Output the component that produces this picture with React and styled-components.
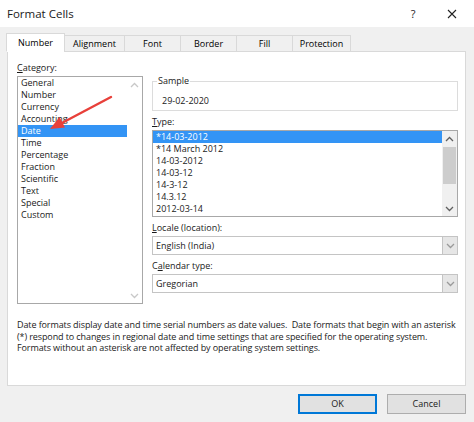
import React from "react";
import styled, { createGlobalStyle } from "styled-components";

const GlobalStyle = createGlobalStyle`
  body {
    margin: 0;
    background: #fff;
    font-family: "Open Sans", "Noto Sans", sans-serif;
    color: #000;
  }
`;

const tabs = [
  { label: "Number", width: 59, active: true },
  { label: "Alignment", width: 61 },
  { label: "Font", width: 57 },
  { label: "Border", width: 57 },
  { label: "Fill", width: 57 },
  { label: "Protection", width: 59 },
];

const categories = [
  "General",
  "Number",
  "Currency",
  "Accounting",
  "Date",
  "Time",
  "Percentage",
  "Fraction",
  "Scientific",
  "Text",
  "Special",
  "Custom",
];

const types = [
  "*14-03-2012",
  "*14 March 2012",
  "14-03-2012",
  "14-03-12",
  "14-3-12",
  "14.3.12",
  "2012-03-14",
];

function Chevron({ up, color = "#606060" }) {
  return (
    <svg width="9" height="6" viewBox="0 0 9 6">
      <polyline
        points={up ? "1,5 4.5,1.5 8,5" : "1,1 4.5,4.5 8,1"}
        fill="none"
        stroke={color}
        strokeWidth="1.3"
      />
    </svg>
  );
}

function App() {
  return (
    <Window>
      <GlobalStyle />
      <TitleBar>
        <Title>Format Cells</Title>
        <TitleButtons>
          <TitleButton>?</TitleButton>
          <TitleButton>
            <svg width="10" height="10" viewBox="0 0 10 10">
              <path d="M1 1 L9 9 M9 1 L1 9" stroke="#222" strokeWidth="1.1" />
            </svg>
          </TitleButton>
        </TitleButtons>
      </TitleBar>

      <TabRow>
        {tabs.map((t) => (
          <Tab key={t.label} $active={t.active} $width={t.width}>
            {t.label}
          </Tab>
        ))}
      </TabRow>

      <Panel>
        <Columns>
          <LeftColumn>
            <Label>
              <u>C</u>ategory:
            </Label>
            <ListBox $height={228}>
              <ListItems>
                {categories.map((c) => (
                  <ListItem key={c} $selected={c === "Date"}>
                    {c}
                  </ListItem>
                ))}
              </ListItems>
              <ScrollBar $disabled>
                <ScrollArrow>
                  <Chevron up color="#c8c8c8" />
                </ScrollArrow>
                <ScrollTrack />
                <ScrollArrow>
                  <Chevron color="#c8c8c8" />
                </ScrollArrow>
              </ScrollBar>
            </ListBox>
          </LeftColumn>

          <RightColumn>
            <SampleBox>
              <SampleLegend>Sample</SampleLegend>
              <SampleValue>29-02-2020</SampleValue>
            </SampleBox>

            <Label $top={5}>
              <u>T</u>ype:
            </Label>
            <ListBox $height={87}>
              <ListItems>
                {types.map((t, i) => (
                  <ListItem key={t} $selected={i === 0}>
                    {t}
                  </ListItem>
                ))}
              </ListItems>
              <ScrollBar>
                <ScrollArrow>
                  <Chevron up />
                </ScrollArrow>
                <ScrollTrack>
                  <ScrollThumb />
                </ScrollTrack>
                <ScrollArrow>
                  <Chevron />
                </ScrollArrow>
              </ScrollBar>
            </ListBox>

            <Label $top={5}>
              <u>L</u>ocale (location):
            </Label>
            <Combo>
              <ComboText>English (India)</ComboText>
              <ComboButton>
                <Chevron color="#9a9a9a" />
              </ComboButton>
            </Combo>

            <Label $top={5}>
              C<u>a</u>lendar type:
            </Label>
            <Combo>
              <ComboText>Gregorian</ComboText>
              <ComboButton>
                <Chevron color="#9a9a9a" />
              </ComboButton>
            </Combo>
          </RightColumn>
        </Columns>

        <Description>
          Date formats display date and time serial numbers as date values.&nbsp; Date
          formats that begin with an asterisk
          <br />
          (*) respond to changes in regional date and time settings that are
          specified for the operating system.
          <br />
          Formats without an asterisk are not affected by operating system
          settings.
        </Description>
      </Panel>

      <Footer>
        <Button $default>OK</Button>
        <Button>Cancel</Button>
      </Footer>

      <Arrow width="474" height="422" viewBox="0 0 474 422">
        <line x1="111" y1="97" x2="60" y2="124" stroke="#e8403a" strokeWidth="2.4" strokeLinecap="round" />
        <polygon points="50,129 65,127.5 59.5,117" fill="#e8403a" />
      </Arrow>
    </Window>
  );
}

const Window = styled.div`
  position: relative;
  width: 474px;
  height: 422px;
  background: #f0f0f0;
  display: flex;
  flex-direction: column;
  font-size: 9px;
  line-height: 12px;
  overflow: hidden;
`;

const TitleBar = styled.div`
  height: 27px;
  background: #fff;
  display: flex;
  align-items: center;
  padding-left: 7px;
  flex-shrink: 0;
`;

const Title = styled.div`
  font-size: 11.5px;
  color: #1a1a1a;
`;

const TitleButtons = styled.div`
  margin-left: auto;
  margin-right: 7px;
  display: flex;
  gap: 9px;
`;

const TitleButton = styled.div`
  width: 30px;
  height: 20px;
  display: flex;
  align-items: center;
  justify-content: center;
  font-size: 11px;
  color: #222;
`;

const TabRow = styled.div`
  display: flex;
  align-items: flex-end;
  margin: 6px 0 -1px 6px;
  height: 19px;
  position: relative;
  z-index: 1;
`;

const Tab = styled.div`
  width: ${(p) => p.$width}px;
  height: ${(p) => (p.$active ? 19 : 17)}px;
  box-sizing: border-box;
  border: 1px solid #d9d9d9;
  border-bottom-color: ${(p) => (p.$active ? "#fff" : "#d9d9d9")};
  background: ${(p) => (p.$active ? "#fff" : "#f0f0f0")};
  display: flex;
  align-items: center;
  justify-content: center;
  padding-top: ${(p) => (p.$active ? 0 : 1)}px;
  & + & {
    margin-left: -1px;
  }
`;

const Panel = styled.div`
  margin: 0 8px 0 7px;
  height: 335px;
  box-sizing: border-box;
  background: #fff;
  border: 1px solid #d9d9d9;
  padding: 10px 7px 0 9px;
  display: flex;
  flex-direction: column;
  flex-shrink: 0;
`;

const Columns = styled.div`
  display: grid;
  grid-template-columns: 126px 306px;
  column-gap: 9px;
`;

const LeftColumn = styled.div`
  display: flex;
  flex-direction: column;
`;

const RightColumn = styled.div`
  display: flex;
  flex-direction: column;
  padding-top: 13px;
`;

const Label = styled.div`
  height: 12px;
  margin-top: ${(p) => p.$top || 0}px;
  margin-bottom: 2px;
  color: #1a1a1a;
  white-space: nowrap;
  u {
    text-decoration-thickness: 1px;
    text-underline-offset: 1px;
  }
`;

const ListBox = styled.div`
  height: ${(p) => p.$height}px;
  box-sizing: border-box;
  border: 1px solid #a8a8a8;
  display: flex;
  background: #fff;
`;

const ListItems = styled.div`
  flex: 1;
  min-width: 0;
`;

const ListItem = styled.div`
  height: 12px;
  padding-left: 3px;
  white-space: nowrap;
  background: ${(p) => (p.$selected ? "#3394f5" : "transparent")};
  color: ${(p) => (p.$selected ? "#fff" : "#1a1a1a")};
`;

const ScrollBar = styled.div`
  width: 15px;
  display: flex;
  flex-direction: column;
  background: ${(p) => (p.$disabled ? "#fff" : "#f0f0f0")};
`;

const ScrollArrow = styled.div`
  height: 15px;
  display: flex;
  align-items: center;
  justify-content: center;
  flex-shrink: 0;
`;

const ScrollTrack = styled.div`
  flex: 1;
  padding: 1px 1px;
`;

const ScrollThumb = styled.div`
  height: 37px;
  background: #cdcdcd;
`;

const SampleBox = styled.fieldset`
  margin: 0;
  padding: 0 0 3px 4px;
  border: 1px solid #dcdcdc;
  min-width: 0;
`;

const SampleLegend = styled.legend`
  padding: 0 1px;
  line-height: 12px;
  color: #1a1a1a;
`;

const SampleValue = styled.div`
  margin: 8px 0 0 5px;
  color: #1a1a1a;
`;

const Combo = styled.div`
  height: 19px;
  box-sizing: border-box;
  border: 1px solid #c4c4c4;
  display: flex;
  align-items: stretch;
  background: #fff;
`;

const ComboText = styled.div`
  flex: 1;
  padding-left: 3px;
  display: flex;
  align-items: center;
  color: #1a1a1a;
`;

const ComboButton = styled.div`
  width: 14px;
  background: #e6e6e6;
  border-left: 1px solid #c4c4c4;
  display: flex;
  align-items: center;
  justify-content: center;
`;

const Description = styled.div`
  margin-top: 15px;
  line-height: 11.5px;
  letter-spacing: -0.1px;
  color: #1a1a1a;
  white-space: nowrap;
`;

const Footer = styled.div`
  display: flex;
  justify-content: flex-end;
  gap: 10px;
  padding: 8px 8px 0 0;
`;

const Button = styled.div`
  width: 79px;
  height: 20px;
  box-sizing: border-box;
  background: #e1e1e1;
  border: 1px solid ${(p) => (p.$default ? "#0078d7" : "#adadad")};
  box-shadow: ${(p) => (p.$default ? "inset 0 0 0 1px #0078d7" : "none")};
  display: flex;
  align-items: center;
  justify-content: center;
  color: #1a1a1a;
`;

const Arrow = styled.svg`
  position: absolute;
  left: 0;
  top: 0;
  pointer-events: none;
`;

export default App;
